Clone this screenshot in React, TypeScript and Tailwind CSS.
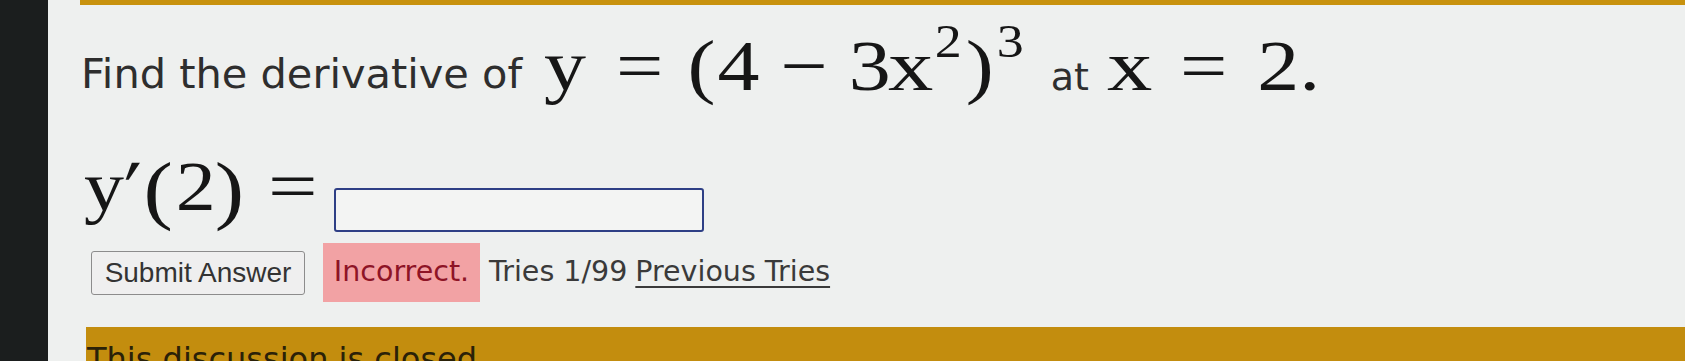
const sans = "font-['DejaVu_Sans','Noto_Sans',sans-serif]";
const serif = "font-['Liberation_Serif','DejaVu_Serif',serif]";

export default function App() {
  return (
    <div className="flex h-[361px] w-[1685px] overflow-hidden bg-[#eef0ef]">
      <div className="w-[48px] shrink-0 bg-[#1b1e1e]" />

      <div className="flex flex-1 flex-col overflow-hidden pl-[32px]">
        <div className="h-[5px] shrink-0 bg-[#c8920e]" />

        {/* question line */}
        <div className="mt-[2px] shrink-0 whitespace-nowrap text-[0px] leading-none text-[#161616]">
          <span className={`${sans} ml-[1px] inline-block align-[2px] text-[41.5px] leading-none text-[#2e2e2e]`}>
            Find the derivative of
          </span>
          <span className="inline-block origin-[50%_86%] scale-y-[0.86] text-[0px] leading-none">
            <span className={`${serif} ml-[22px] inline-block text-[84px] leading-none`}>y</span>
            <span className={`${serif} ml-[30px] inline-block text-[84px] leading-none`}>=</span>
            <span className={`${serif} ml-[24px] inline-block text-[84px] leading-none`}>(</span>
            <span className={`${serif} ml-[2px] inline-block text-[84px] leading-none`}>4</span>
            <span className={`${serif} ml-[21px] inline-block text-[84px] leading-none`}>−</span>
            <span className={`${serif} ml-[21px] inline-block text-[84px] leading-none`}>3</span>
            <span className={`${serif} -ml-[3px] inline-block origin-left scale-x-[1.08] text-[84px] leading-none`}>x</span>
            <span className={`${serif} ml-[5px] inline-block align-[38px] text-[54px] leading-none`}>2</span>
            <span className={`${serif} ml-[4px] inline-block text-[84px] leading-none`}>)</span>
            <span className={`${serif} ml-[3px] inline-block align-[38px] text-[54px] leading-none`}>3</span>
          </span>
          <span className={`${sans} ml-[27px] inline-block text-[38px] leading-none text-[#2e2e2e]`}>at</span>
          <span className="inline-block origin-[50%_86%] scale-y-[0.86] text-[0px] leading-none">
            <span className={`${serif} ml-[18px] inline-block origin-left scale-x-[1.08] text-[84px] leading-none`}>x</span>
            <span className={`${serif} ml-[31px] inline-block text-[84px] leading-none`}>=</span>
            <span className={`${serif} ml-[30px] inline-block text-[84px] leading-none`}>2</span>
            <span className={`${serif} inline-block text-[84px] leading-none`}>.</span>
          </span>
        </div>

        {/* answer line */}
        <div className="mt-[36px] flex shrink-0 items-start">
          <div className="origin-[50%_79%] scale-y-[0.86] whitespace-nowrap text-[0px] leading-none text-[#161616]">
            <span className={`${serif} ml-[4px] inline-block text-[80px] leading-none`}>y</span>
            <span className={`${serif} -ml-[4px] inline-block -skew-x-12 text-[84px] leading-none`}>′</span>
            <span className={`${serif} ml-[5px] inline-block align-[-6px] text-[88px] leading-none`}>(</span>
            <span className={`${serif} ml-[3px] inline-block text-[80px] leading-none`}>2</span>
            <span className={`${serif} -ml-[1px] inline-block align-[-6px] text-[88px] leading-none`}>)</span>
            <span className={`${serif} ml-[24px] inline-block origin-left scale-x-[1.1] text-[80px] leading-none`}>=</span>
          </div>
          <div className="ml-[21px] mt-[48px] h-[44px] w-[370px] rounded-[3px] border-2 border-[#2e3f85] bg-[#f3f4f3]" />
        </div>

        {/* submit line */}
        <div className={`${sans} mt-[11px] flex h-[59px] shrink-0 items-center pl-[11px]`}>
          <button className="flex h-[44px] w-[214px] items-center justify-center rounded-[3px] border-[1.5px] border-[#8c8c8c] bg-[#efefef] font-['Liberation_Sans',sans-serif] text-[28px] text-[#333]">
            Submit Answer
          </button>
          <div className="ml-[18px] flex h-[59px] w-[157px] items-center justify-center bg-[#f2a2a4] text-[28.5px] text-[#8e1426]">
            Incorrect.
          </div>
          <span className="ml-[9px] text-[28.5px] text-[#3a3a3a]">Tries 1/99</span>
          <span className="ml-[8px] text-[28.5px] text-[#3a3a3a] underline decoration-[2px] underline-offset-[5px]">
            Previous Tries
          </span>
        </div>

        <div className="ml-[6px] mt-[25px] h-[34px] shrink-0 overflow-hidden bg-[#c38d0e] pl-[1px] pt-[16px]">
          <span className={`${sans} block whitespace-nowrap text-[32px] leading-none text-[#2a2108]`}>
            This discussion is closed
          </span>
        </div>
      </div>
    </div>
  );
}
